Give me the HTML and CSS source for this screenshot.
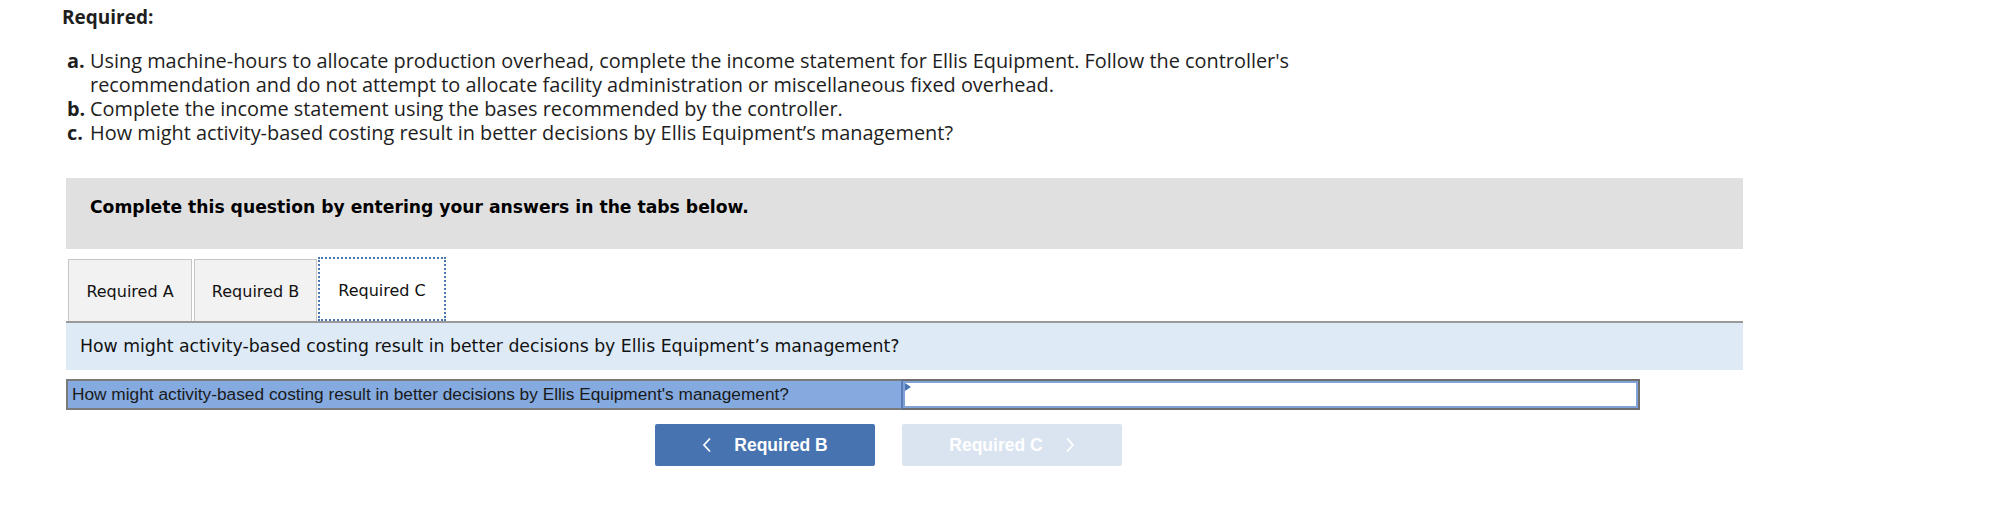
FILE: index.html
```html
<!DOCTYPE html>
<html>
<head>
<meta charset="utf-8">
<link rel="stylesheet" href="styles.css">
</head>
<body>
<div class="page">
  <div class="req-title">Required:</div>
  <ol class="req-list">
    <li><b>a.</b><span>Using machine-hours to allocate production overhead, complete the income statement for Ellis Equipment. Follow the controller's recommendation and do not attempt to allocate facility administration or miscellaneous fixed overhead.</span></li>
    <li><b>b.</b><span>Complete the income statement using the bases recommended by the controller.</span></li>
    <li><b>c.</b><span>How might activity-based costing result in better decisions by Ellis Equipment’s management?</span></li>
  </ol>
  <div class="quiz">
    <div class="instructions">Complete this question by entering your answers in the tabs below.</div>
    <div class="tabs">
      <div class="tab">Required A</div>
      <div class="tab">Required B</div>
      <div class="tab active">Required C</div>
    </div>
    <div class="prompt">How might activity-based costing result in better decisions by Ellis Equipment’s management?</div>
    <div class="answer-row">
      <div class="answer-label">How might activity-based costing result in better decisions by Ellis Equipment's management?</div>
      <div class="answer-input"><span class="flag"></span></div>
    </div>
    <div class="nav">
      <div class="btn prev"><svg class="chev" width="10" height="16" viewBox="0 0 10 16"><path d="M8 1.5 L2 8 L8 14.5" fill="none" stroke="#fff" stroke-width="1.8"/></svg><span>Required B</span></div>
      <div class="btn next"><span>Required C</span><svg class="chev" width="10" height="16" viewBox="0 0 10 16"><path d="M2 1.5 L8 8 L2 14.5" fill="none" stroke="#fff" stroke-width="1.8"/></svg></div>
    </div>
  </div>
</div>
</body>
</html>
```
FILE: styles.css
```css
html, body {
  margin: 0;
  padding: 0;
  background: #fff;
}
.page {
  padding: 5px 0 0 62px;
  font-family: "Open Sans", Lato, sans-serif;
  color: #1e1e1e;
}
.req-title {
  font-size: 19px;
  font-weight: bold;
  line-height: 24px;
}
.req-list {
  list-style: none;
  margin: 20px 0 0 0;
  padding: 0 0 0 5px;
  width: 1270px;
  font-size: 19.9px;
  line-height: 24px;
}
.req-list li {
  display: flex;
}
.req-list li b {
  flex: none;
  width: 23px;
}
.quiz {
  margin: 33px 0 0 4px;
  width: 1677px;
}
.instructions {
  background: #e0e0e0;
  height: 71px;
  box-sizing: border-box;
  padding: 19px 0 0 24px;
  font-family: "DejaVu Sans", Verdana, sans-serif;
  font-weight: bold;
  font-size: 17.2px;
  line-height: 20px;
  color: #000;
}
.tabs {
  display: flex;
  gap: 2px;
  margin-top: 10px;
  padding-left: 2px;
  border-bottom: 2px solid #9a9a9a;
  height: 62px;
  box-sizing: content-box;
}
.tab {
  box-sizing: border-box;
  width: 124px;
  height: 62px;
  background: #f2f2f2;
  border: 1px solid #c6c6c6;
  border-bottom: none;
  font-family: "DejaVu Sans", Verdana, sans-serif;
  font-size: 16px;
  color: #111;
  display: flex;
  align-items: center;
  justify-content: center;
  padding-top: 2px;
}
.tab:nth-child(2) {
  width: 123px;
}
.tab.active {
  background: #fff;
  border: 2px dotted #4a76b4;
  width: 128px;
  height: 64px;
  margin-top: -2px;
  margin-left: -1px;
}
.prompt {
  background: #deebf7;
  height: 47px;
  box-sizing: border-box;
  padding: 13px 0 0 14px;
  font-family: "DejaVu Sans", Verdana, sans-serif;
  font-size: 17.3px;
  line-height: 20px;
  color: #111;
}
.answer-row {
  display: flex;
  margin-top: 9px;
  height: 31px;
  width: 1574px;
}
.answer-label {
  box-sizing: border-box;
  width: 835px;
  background: #84aae0;
  border: 2px solid #7a7a7a;
  border-right: none;
  font-family: "Liberation Sans", Arial, sans-serif;
  font-size: 17.3px;
  line-height: 27px;
  padding-left: 4px;
  color: #1a1a1a;
  white-space: nowrap;
  overflow: hidden;
}
.answer-input {
  position: relative;
  flex: 1;
  box-sizing: border-box;
  border: 2px solid #6e6e6e;
  border-left-color: #5a7fb8;
  box-shadow: inset 0 0 0 2px #7fa3d9;
  background: #fff;
}
.flag {
  position: absolute;
  left: 2px;
  top: 2px;
  width: 0;
  height: 0;
  border-top: 4px solid transparent;
  border-bottom: 4px solid transparent;
  border-left: 6px solid #4a76b4;
}
.nav {
  display: flex;
  gap: 27px;
  margin-top: 14px;
  padding-left: 589px;
}
.btn {
  width: 220px;
  height: 42px;
  border-radius: 2px;
  display: flex;
  align-items: center;
  justify-content: center;
  gap: 22px;
  font-family: "Liberation Sans", Arial, sans-serif;
  font-weight: bold;
  font-size: 17.5px;
  color: #fff;
}
.btn.prev {
  background: #4773b1;
}
.btn.next {
  background: #dae4f0;
}
.chev {
  display: block;
}
```
